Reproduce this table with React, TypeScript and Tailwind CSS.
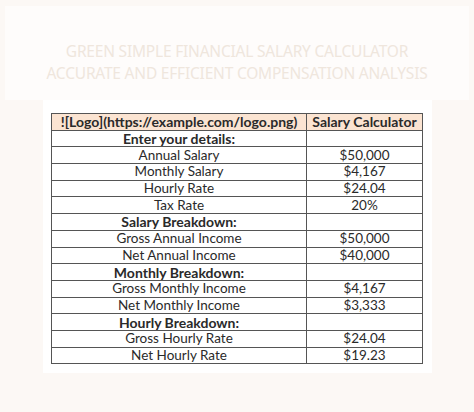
import React from "react";

type Row = { label: string; value?: string; bold?: boolean };

const rows: Row[] = [
  { label: "Enter your details:", bold: true },
  { label: "Annual Salary", value: "$50,000" },
  { label: "Monthly Salary", value: "$4,167" },
  { label: "Hourly Rate", value: "$24.04" },
  { label: "Tax Rate", value: "20%" },
  { label: "Salary Breakdown:", bold: true },
  { label: "Gross Annual Income", value: "$50,000" },
  { label: "Net Annual Income", value: "$40,000" },
  { label: "Monthly Breakdown:", bold: true },
  { label: "Gross Monthly Income", value: "$4,167" },
  { label: "Net Monthly Income", value: "$3,333" },
  { label: "Hourly Breakdown:", bold: true },
  { label: "Gross Hourly Rate", value: "$24.04" },
  { label: "Net Hourly Rate", value: "$19.23" },
];

export default function App() {
  return (
    <div className="w-[474px] h-[412px] bg-[#fcf8f5] overflow-hidden flex flex-col" style={{ fontFamily: "Lato, 'Noto Sans', sans-serif" }}>
      <div className="mx-[5px] mt-[6px] h-[94px] bg-[#fefcfb] flex flex-col items-center pt-[34px]">
        <div className="text-[#efe6dd] text-[15.5px] leading-[22px] text-center tracking-[-0.2px]" style={{ fontFamily: "'Noto Sans', sans-serif" }}>
          GREEN SIMPLE FINANCIAL SALARY CALCULATOR
        </div>
        <div className="text-[#efe6dd] text-[15.5px] leading-[22px] text-center tracking-[-0.2px]" style={{ fontFamily: "'Noto Sans', sans-serif" }}>
          ACCURATE AND EFFICIENT COMPENSATION ANALYSIS
        </div>
      </div>
      <div className="mx-[43px] w-[389px] h-[273px] bg-white pt-[13px] pl-[8px]">
        <table className="border-collapse text-[#2a2a2a] text-[13.5px]">
          <tbody>
            <tr className="h-[16.7px] bg-[#fbe4d2]">
              <td className="w-[255px] border border-[#555] text-center font-bold text-[14px] leading-[15px] p-0 whitespace-nowrap">
                ![Logo](https://example.com/logo.png)
              </td>
              <td className="w-[116px] border border-[#555] text-center font-bold text-[14px] leading-[15px] p-0">
                Salary Calculator
              </td>
            </tr>
            {rows.map((r, i) => (
              <tr key={i} className="h-[16.7px]">
                <td className={`border border-[#555] text-center leading-[15px] p-0 ${r.bold ? "font-bold text-[14px]" : ""}`}>
                  {r.label}
                </td>
                <td className="border border-[#555] text-center leading-[15px] p-0">{r.value ?? ""}</td>
              </tr>
            ))}
          </tbody>
        </table>
      </div>
    </div>
  );
}
